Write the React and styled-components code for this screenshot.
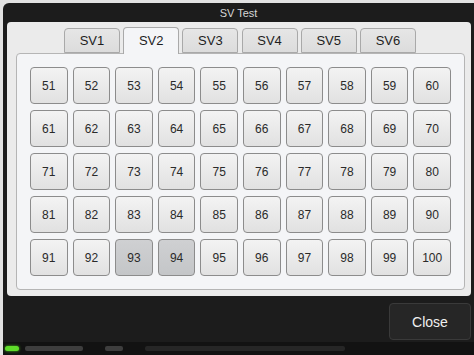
import React, { useState } from "react";
import styled, { createGlobalStyle } from "styled-components";

const GlobalStyle = createGlobalStyle`
  html, body {
    margin: 0;
    padding: 0;
    background: #e2e2e2;
    font-family: "Liberation Sans", Arial, sans-serif;
  }
`;

const tabs = ["SV1", "SV2", "SV3", "SV4", "SV5", "SV6"];
const pressed = [93, 94];

export default function App() {
    const [activeTab, setActiveTab] = useState(1);
    const values = Array.from({ length: 50 }, (_, i) => 51 + i);

    return (
        <>
            <GlobalStyle />
            <Page>
                <Dialog>
                    <TitleBar>SV Test</TitleBar>

                    <OuterPanel>
                        <TabRow>
                            {tabs.map((t, i) => (
                                <Tab key={t} $active={i === activeTab} onClick={() => setActiveTab(i)}>
                                    {t}
                                </Tab>
                            ))}
                        </TabRow>

                        <InnerPanel>
                            <ValueGrid>
                                {values.map(v => (
                                    <ValueButton key={v} $pressed={pressed.includes(v)}>{v}</ValueButton>
                                ))}
                            </ValueGrid>
                        </InnerPanel>
                    </OuterPanel>

                    <Footer>
                        <CloseButton>Close</CloseButton>
                    </Footer>

                    <StatusStrip>
                        <Led />
                        <StripGap $w={6} />
                        <StripBar $w={58} />
                        <StripGap $w={22} />
                        <StripBar $w={18} />
                        <StripGap $w={22} />
                        <StripBar $w={200} $dim />
                    </StatusStrip>
                </Dialog>
            </Page>
        </>
    );
}

const Page = styled.div`
    width: 474px;
    height: 355px;
    box-sizing: border-box;
    padding: 3px 0 0 3px;
    overflow: hidden;
`;

const Dialog = styled.div`
    width: 471px;
    height: 352px;
    background: #1c1c1c;
    border-top-left-radius: 6px;
    display: flex;
    flex-direction: column;
`;

const TitleBar = styled.div`
    height: 19px;
    display: flex;
    align-items: center;
    justify-content: center;
    color: #d6d6d6;
    font-size: 11px;
`;

const OuterPanel = styled.div`
    margin: 0 0 0 4px;
    width: 464px;
    height: 274px;
    box-sizing: border-box;
    background: #ebebeb;
    border-radius: 4px;
    padding: 5px 6px 6px 9px;
    display: flex;
    flex-direction: column;
`;

const TabRow = styled.div`
    display: flex;
    gap: 3.2px;
    padding-left: 48px;
    height: 26px;
    align-items: flex-end;
    position: relative;
    z-index: 1;
`;

const Tab = styled.div`
    width: 56px;
    height: ${p => (p.$active ? "27px" : "25px")};
    box-sizing: border-box;
    margin-bottom: ${p => (p.$active ? "-1px" : "0")};
    border: 1px solid #a9a9a9;
    border-bottom: ${p => (p.$active ? "none" : "1px solid #a9a9a9")};
    border-radius: 4px 4px 0 0;
    background: ${p => (p.$active ? "#f4f5f7" : "linear-gradient(#e6e6e6, #dcdcdc)")};
    color: #1e1e1e;
    font-size: 13px;
    display: flex;
    align-items: center;
    justify-content: center;
    padding-bottom: ${p => (p.$active ? "2px" : "0")};
    cursor: pointer;
`;

const InnerPanel = styled.div`
    flex: 1;
    box-sizing: border-box;
    background: #f4f5f7;
    border: 1px solid #b5b5b5;
    border-radius: 4px;
    padding: 13px 0 0 13px;
`;

const ValueGrid = styled.div`
    width: 421px;
    display: grid;
    grid-template-columns: repeat(10, 1fr);
    grid-auto-rows: 37px;
    column-gap: 5px;
    row-gap: 6px;
`;

const ValueButton = styled.div`
    box-sizing: border-box;
    border: 1px solid #8c8c8c;
    border-radius: 4px;
    background: ${p => (p.$pressed ? "linear-gradient(#cfd0d2, #c4c6c8)" : "linear-gradient(#f3f3f3, #e1e1e1)")};
    color: #2a2a2a;
    font-size: 12px;
    display: flex;
    align-items: center;
    justify-content: center;
    cursor: pointer;
`;

const Footer = styled.div`
    height: 46px;
    display: flex;
    justify-content: flex-end;
    align-items: flex-start;
    padding: 7px 3px 0 0;
    box-sizing: border-box;
`;

const CloseButton = styled.div`
    width: 82px;
    height: 37px;
    box-sizing: border-box;
    background: #262626;
    border: 1px solid #3a3a3a;
    border-radius: 4px;
    color: #f0f0f0;
    font-size: 14px;
    display: flex;
    align-items: center;
    justify-content: center;
`;

const StatusStrip = styled.div`
    flex: 1;
    background: #121212;
    display: flex;
    align-items: center;
    padding-left: 2px;
`;

const Led = styled.div`
    width: 14px;
    height: 5px;
    border-radius: 3px;
    background: #5fdc2a;
    box-shadow: 0 0 3px #4fc81e;
`;

const StripBar = styled.div`
    width: ${p => p.$w}px;
    height: 5px;
    border-radius: 2px;
    background: ${p => (p.$dim ? "#262626" : "#3e3e3e")};
`;

const StripGap = styled.div`
    width: ${p => p.$w}px;
`;
